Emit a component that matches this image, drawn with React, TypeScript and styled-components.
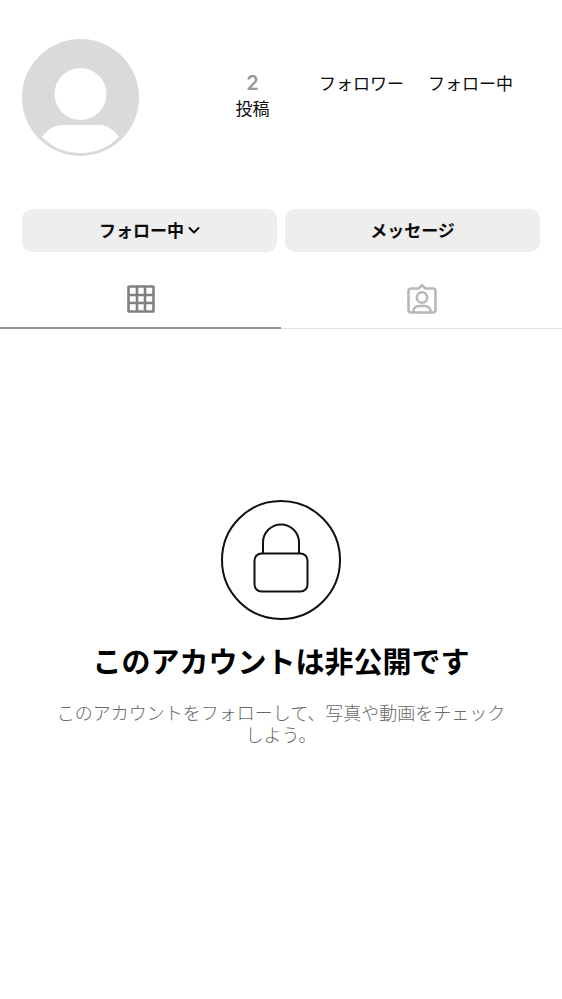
import React, { useState } from "react";
import styled, { createGlobalStyle } from "styled-components";

const GlobalStyle = createGlobalStyle`
  *, *::before, *::after { box-sizing: border-box; }
  body {
    margin: 0;
    background: #fff;
    color: #0c0c0c;
    font-family: "Noto Sans CJK JP", sans-serif;
  }
`;

const Page = styled.div`
  min-height: 100vh;
  padding-top: 39px;
`;

const ProfileHeader = styled.header`
  display: flex;
  align-items: flex-start;
  justify-content: space-between;
  padding: 0 37px 0 22px;
`;

const Avatar = styled.svg`
  display: block;
  width: 117px;
  height: 117px;
  flex: none;
`;

const Stats = styled.ul`
  display: grid;
  grid-template-columns: repeat(3, 1fr);
  flex: 0 1 327px;
  margin: 0;
  padding: 31px 0 0;
  list-style: none;
`;

const Stat = styled.li`
  display: flex;
  flex-direction: column;
  align-items: center;
  font-size: 17px;
  line-height: 25px;
  white-space: nowrap;
`;

const Count = styled.span`
  padding-top: 1px;
  color: #999;
  font-family: Inter, sans-serif;
  font-size: 20px;
  font-weight: 600;
  line-height: 24px;
`;

const Actions = styled.div`
  display: grid;
  grid-template-columns: 1fr 1fr;
  gap: 8px;
  margin-top: 53px;
  padding: 0 22px;
`;

const ActionButton = styled.button`
  display: flex;
  align-items: center;
  justify-content: center;
  gap: 4px;
  height: 43px;
  padding: 0 0 2px;
  border: 0;
  border-radius: 10px;
  background: #eee;
  color: #0c0c0c;
  font: inherit;
  font-size: 17px;
  font-weight: 600;
  cursor: pointer;
`;

const Tabs = styled.nav`
  display: grid;
  grid-template-columns: 1fr 1fr;
  margin-top: 17px;
  box-shadow: inset 0 -1px #e4e4e4;
`;

const Tab = styled.button<{ $active: boolean }>`
  display: flex;
  align-items: center;
  justify-content: center;
  height: 60px;
  padding: 2px 0 0;
  border: 0;
  border-bottom: 2px solid ${(p) => (p.$active ? "#929292" : "transparent")};
  background: none;
  color: ${(p) => (p.$active ? "#808080" : "#b8b8b8")};
  cursor: pointer;
`;

const PrivateNotice = styled.main`
  display: flex;
  flex-direction: column;
  align-items: center;
  padding: 171px 54px 0;
  text-align: center;
`;

const NoticeTitle = styled.h1`
  margin: 19px 0 0;
  color: #000;
  font-size: 29px;
  font-weight: 600;
  line-height: 42px;
`;

const NoticeText = styled.p`
  max-width: 454px;
  margin: 20px 0 0;
  color: #686868;
  font-size: 18px;
  font-weight: 300;
  line-height: 22px;
`;

const stats = [
  { label: "投稿", count: 2 },
  { label: "フォロワー" },
  { label: "フォロー中" },
];

const ChevronIcon = () => (
  <svg width="12" height="12" viewBox="0 0 12 12" fill="none" aria-hidden="true">
    <path d="M1.5 4l4.5 4.5L10.5 4" stroke="currentColor" strokeWidth="2" strokeLinecap="round" strokeLinejoin="round" />
  </svg>
);

const GridIcon = () => (
  <svg width="28" height="28" viewBox="0 0 28 28" fill="none" stroke="currentColor" aria-hidden="true">
    <rect x="1.5" y="1.5" width="25" height="25" rx="0.6" strokeWidth="2.6" />
    <path d="M10 1v26M18 1v26M1 10h26M1 18h26" strokeWidth="2.6" />
  </svg>
);

const TaggedIcon = () => (
  <svg width="32" height="32" viewBox="0 0 32 32" fill="none" stroke="currentColor" strokeWidth="2.6" strokeLinejoin="round" aria-hidden="true">
    <path d="M5 5.5h7.5L16 2.2l3.5 3.3H27a2.5 2.5 0 0 1 2.5 2.5v19a2.5 2.5 0 0 1-2.5 2.5H5a2.5 2.5 0 0 1-2.5-2.5V8A2.5 2.5 0 0 1 5 5.5z" />
    <circle cx="16" cy="14.5" r="5.2" />
    <path d="M7.2 29.5c0-4 2.500-6.500 6-6.500h5.600c3.500 0 6 2.500 6 6.500" />
  </svg>
);

const LockIcon = () => (
  <svg width="120" height="120" viewBox="0 0 120 120" fill="none" stroke="#111" strokeWidth="2" aria-hidden="true">
    <circle cx="60" cy="60" r="59" />
    <path d="M42 53V42.5a18 18 0 0 1 36 0V53" />
    <rect x="33.5" y="53.5" width="53" height="38" rx="7" />
  </svg>
);

export default function App() {
  const [tab, setTab] = useState("posts");
  return (
    <>
      <GlobalStyle />
      <Page>
        <ProfileHeader>
          <Avatar viewBox="0 0 117 117" role="img" aria-label="プロフィール写真">
            <circle cx="58.5" cy="58.5" r="58.5" fill="#dadada" />
            <circle cx="58.5" cy="55" r="26" fill="#fff" />
            <path d="M20 98c5-7 11-12 20-12h37c9 0 15 5 20 12C86 109 73 114 58.5 114S31 109 20 98z" fill="#fff" />
          </Avatar>
          <Stats>
            {stats.map((s) => (
              <Stat key={s.label}>
                {s.count !== undefined && <Count>{s.count}</Count>}
                <span>{s.label}</span>
              </Stat>
            ))}
          </Stats>
        </ProfileHeader>
        <Actions>
          <ActionButton type="button">
            フォロー中
            <ChevronIcon />
          </ActionButton>
          <ActionButton type="button">メッセージ</ActionButton>
        </Actions>
        <Tabs>
          <Tab type="button" aria-label="投稿" aria-pressed={tab === "posts"} $active={tab === "posts"} onClick={() => setTab("posts")}>
            <GridIcon />
          </Tab>
          <Tab type="button" aria-label="タグ付けされた写真" aria-pressed={tab === "tagged"} $active={tab === "tagged"} onClick={() => setTab("tagged")}>
            <TaggedIcon />
          </Tab>
        </Tabs>
        <PrivateNotice>
          <LockIcon />
          <NoticeTitle>このアカウントは非公開です</NoticeTitle>
          <NoticeText>このアカウントをフォローして、写真や動画をチェックしよう。</NoticeText>
        </PrivateNotice>
      </Page>
    </>
  );
}
